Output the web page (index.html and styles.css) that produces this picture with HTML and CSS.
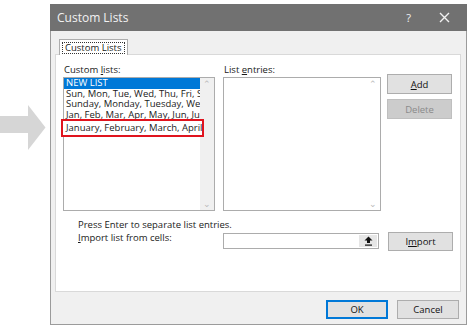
FILE: index.html
```html
<!DOCTYPE html>
<html lang="en">

<head>
    <meta charset="UTF-8">
    <title>Custom Lists</title>
    <link rel="stylesheet" href="styles.css">
</head>

<body>
    <div class="page">
        <svg class="arrow" width="46" height="46" viewBox="0 0 46 46">
            <polygon points="0,11 28,11 28,0 45.5,22.5 28,45 28,28 0,28" fill="#d6d6d6" />
        </svg>

        <div class="dialog">
            <div class="titlebar">
                <span class="title">Custom Lists</span>
                <span class="help">?</span>
                <svg class="close" width="11" height="11" viewBox="0 0 11 11">
                    <path d="M1 1 L10 10 M10 1 L1 10" stroke="#f2f2f2" stroke-width="1.4" />
                </svg>
            </div>

            <div class="content">
                <div class="tabs">
                    <div class="tab"><span class="tab-label">Custom Lists</span></div>
                </div>

                <div class="panel">
                    <div class="lists">
                        <div class="field">
                            <div class="label">Custom <u>l</u>ists:</div>
                            <div class="listbox">
                                <div class="items">
                                    <div class="item selected">NEW LIST</div>
                                    <div class="item">Sun, Mon, Tue, Wed, Thu, Fri, Sat</div>
                                    <div class="item">Sunday, Monday, Tuesday, Wednesday</div>
                                    <div class="item">Jan, Feb, Mar, Apr, May, Jun, Jul</div>
                                    <div class="item marked">January, February, March, April</div>
                                </div>
                                <div class="scroll">
                                    <span class="chev">&#8963;</span>
                                    <span class="chev">&#8964;</span>
                                </div>
                            </div>
                        </div>

                        <div class="field">
                            <div class="label">List <u>e</u>ntries:</div>
                            <div class="listbox entries">
                                <div class="items"></div>
                                <div class="scroll">
                                    <span class="chev">&#8963;</span>
                                    <span class="chev">&#8964;</span>
                                </div>
                            </div>
                        </div>

                        <div class="side">
                            <button class="btn"><u>A</u>dd</button>
                            <button class="btn disabled">Delete</button>
                        </div>
                    </div>

                    <div class="hint">Press Enter to separate list entries.</div>

                    <div class="import">
                        <div class="import-label"><u>I</u>mport list from cells:</div>
                        <div class="ref-input">
                            <span class="ref-btn">
                                <svg width="9" height="10" viewBox="0 0 9 10">
                                    <path d="M4.5 0.5 L8.5 4.5 L6 4.5 L6 7 L3 7 L3 4.5 L0.5 4.5 Z" fill="#111" />
                                    <rect x="1" y="8.5" width="7" height="1.2" fill="#111" />
                                </svg>
                            </span>
                        </div>
                        <button class="btn">I<u>m</u>port</button>
                    </div>
                </div>

                <div class="footer">
                    <button class="btn default">OK</button>
                    <button class="btn">Cancel</button>
                </div>
            </div>
        </div>
    </div>
</body>

</html>
```

FILE: styles.css
```css
body {
    margin: 0;
    background: #ffffff;
    font-family: "Open Sans", "Noto Sans", sans-serif;
    font-size: 9.5px;
    color: #1a1a1a;
}

.page {
    display: flex;
    align-items: flex-start;
    padding-top: 4px;
    width: 474px;
    height: 332px;
    box-sizing: border-box;
}

.arrow {
    margin-top: 101px;
    flex: none;
}

.dialog {
    margin-left: 4px;
    width: 417px;
    height: 321px;
    box-sizing: border-box;
    border: 1px solid #9b9b9b;
    border-top: none;
    background: #f0f0f0;
    display: flex;
    flex-direction: column;
}

.titlebar {
    height: 27px;
    margin: 0 -1px;
    background: #717171;
    display: flex;
    align-items: center;
    padding: 0 17px 0 7px;
    color: #f2f2f2;
}

.title {
    flex: 1;
    font-size: 12px;
}

.help {
    font-size: 11px;
    margin-right: 28px;
}

.content {
    flex: 1;
    display: flex;
    flex-direction: column;
    padding: 8px 5px 0 4px;
}

.tabs {
    display: flex;
    padding-left: 4px;
    margin-bottom: -1px;
    position: relative;
    z-index: 1;
}

.tab {
    background: #ffffff;
    border: 1px solid #adadad;
    border-bottom: none;
    padding: 2px 2px 1px;
}

.tab-label {
    display: block;
    border: 1px dotted #333;
    padding: 0 2px;
    line-height: 10px;
}

.panel {
    height: 238px;
    box-sizing: border-box;
    background: #ffffff;
    border: 1px solid #d9d9d9;
    padding: 9px 0 0 7px;
}

.lists {
    display: grid;
    grid-template-columns: 152px 157px 65px;
    column-gap: 8px;
}

.lists .field:nth-child(2) {
    margin-right: -1px;
}

.side {
    margin-left: -1px;
}

.label {
    line-height: 12px;
    margin-bottom: 1px;
    padding-left: 1px;
}

.listbox {
    height: 134px;
    box-sizing: border-box;
    border: 1px solid #acacac;
    display: flex;
    background: #ffffff;
}

.items {
    flex: 1;
    min-width: 0;
}

.item {
    line-height: 10.7px;
    height: 10.7px;
    padding-left: 2px;
    white-space: nowrap;
    overflow: hidden;
}

.item.selected {
    background: #0078d7;
    color: #ffffff;
}

.item.marked {
    position: relative;
    margin: -2px -4px 0 -3px;
    height: auto;
    line-height: 12px;
    padding: 1px 2px 1px 3px;
    border: 2px solid #e0141e;
    background: #ffffff;
}

.scroll {
    width: 14px;
    background: #f0f0f0;
    display: flex;
    flex-direction: column;
    justify-content: space-between;
    align-items: center;
    color: #b9b9b9;
    font-size: 9px;
    line-height: 12px;
}

.entries .scroll {
    background: #ffffff;
}

.btn {
    display: block;
    font-family: inherit;
    font-size: 9.5px;
    color: #111;
    background: #e1e1e1;
    border: 1px solid #adadad;
    padding: 0;
    margin: 0;
    height: 20px;
    width: 65px;
}

.side .btn:first-child {
    margin-top: 10px;
}

.side .btn+.btn {
    margin-top: 5px;
}

.btn.disabled {
    background: #cccccc;
    border-color: #bfbfbf;
    color: #8a8a8a;
}

.hint {
    margin-top: 8px;
    padding-left: 15px;
    line-height: 12px;
}

.import {
    display: grid;
    grid-template-columns: 152px 157px 65px;
    column-gap: 8px;
    align-items: start;
    margin-top: 1px;
}

.import-label {
    padding-left: 15px;
    line-height: 12px;
}

.ref-input {
    margin-top: 1px;
    height: 16px;
    box-sizing: border-box;
    border: 1px solid #acacac;
    background: #ffffff;
    display: flex;
    justify-content: flex-end;
    width: 156px;
}

.ref-btn {
    width: 18px;
    margin: 1px;
    background: #e6e6e6;
    display: flex;
    align-items: center;
    justify-content: center;
}

.import .btn {
    height: 19px;
}

.footer {
    display: flex;
    justify-content: flex-end;
    gap: 9px;
    padding: 8px 2px 0 0;
}

.footer .btn {
    width: 62px;
    height: 19px;
}

.btn.default {
    border: 2px solid #0078d7;
}
```
